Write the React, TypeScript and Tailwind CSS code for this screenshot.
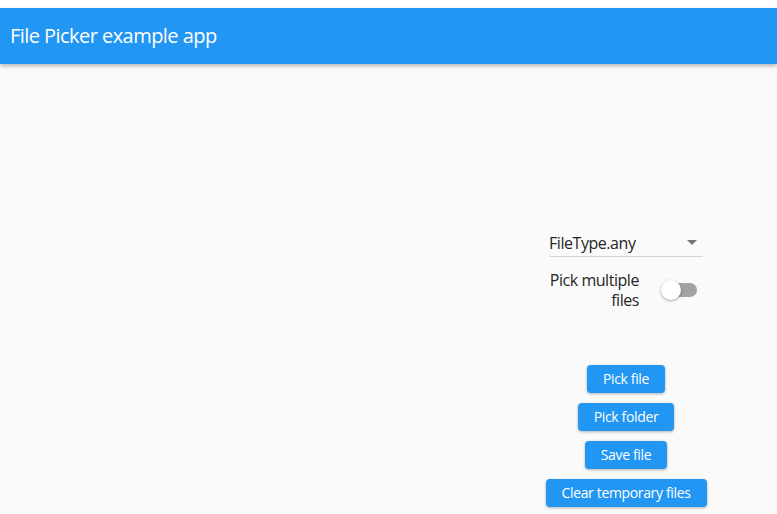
import React from "react";

const font = { fontFamily: '"Open Sans", "Noto Sans", sans-serif' };

function Btn({ label }: { label: string }) {
  return (
    <button className="h-[28px] px-[16px] rounded-[4px] bg-[#2196f3] text-white text-[14px] tracking-[-0.35px] leading-[28px] whitespace-nowrap shadow-[0_1px_3px_rgba(0,0,0,0.3)]">
      {label}
    </button>
  );
}

export default function App() {
  return (
    <div className="w-[777px] h-[514px] overflow-hidden bg-[#fafafa] flex flex-col" style={font}>
      <div className="h-[8px] bg-white shrink-0" />
      <header className="relative z-10 h-[56px] shrink-0 bg-[#2196f3] shadow-[0_2px_4px_rgba(0,0,0,0.28)] flex items-center pl-[10px]">
        <h1 className="text-white text-[20px] tracking-[-0.55px] leading-none">File Picker example app</h1>
      </header>
      <main className="flex-1 flex justify-end pr-[71px] pt-[168px]">
        <div className="w-[160px] flex flex-col items-center">
          <div className="w-[154px] h-[25px] border-b border-[#d6d6d6] flex items-center justify-between">
            <span className="mb-[3px] text-[16px] tracking-[-0.45px] leading-[22px] text-[#262626] whitespace-nowrap">FileType.any</span>
            <svg width="10" height="5" viewBox="0 0 10 5" className="mr-[6px] mb-[3px]">
              <path d="M0 0 L10 0 L5 5 Z" fill="#757575" />
            </svg>
          </div>
          <div className="w-[154px] mt-[13px] flex items-center">
            <div className="w-[90px] text-right text-[16px] tracking-[-0.45px] leading-[20px] text-[#262626] whitespace-nowrap">
              Pick multiple
              <br />
              files
            </div>
            <div className="relative ml-[25px] w-[33px] h-[14px] rounded-full bg-[#a3a3a3]">
              <div className="absolute left-[-3px] top-[-3px] w-[20px] h-[20px] rounded-full bg-white shadow-[0_1px_3px_rgba(0,0,0,0.35)]" />
            </div>
          </div>
          <div className="mt-[55px] flex flex-col items-center gap-[10px]">
            <Btn label="Pick file" />
            <Btn label="Pick folder" />
            <Btn label="Save file" />
            <Btn label="Clear temporary files" />
          </div>
        </div>
      </main>
    </div>
  );
}
